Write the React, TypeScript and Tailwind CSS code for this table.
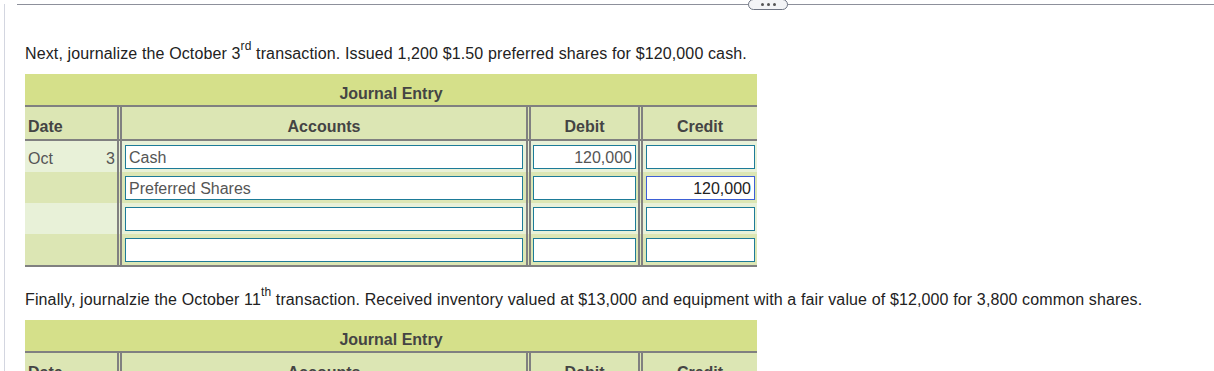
import React from "react";

type Row = {
  date?: string;
  day?: string;
  account?: string;
  debit?: string;
  credit?: string;
  creditFocused?: boolean;
};

function Box({ text, align, focused }: { text?: string; align: "left" | "right"; focused?: boolean }) {
  return (
    <div
      className={
        "h-[24px] bg-white border px-[3px] pt-[1px] text-[16px] leading-[21px] whitespace-nowrap overflow-hidden " +
        (focused ? "border-[#3d5fd6] text-[#222]" : "border-[#1d7b98] text-[#555]") +
        (align === "right" ? " text-right" : " text-left")
      }
    >
      {text ?? ""}
    </div>
  );
}

function JournalTable({ rows }: { rows: Row[] }) {
  return (
    <div className="w-[732px]">
      <div className="h-[33px] bg-[#d5e08a] border-b-2 border-[#808080] pt-[11px] text-center text-[16px] leading-[18px] font-bold text-[#444]">
        Journal Entry
      </div>
      <div className="flex h-[34px] bg-[#dce6b4] border-b-2 border-[#808080] text-[16px] leading-[18px] font-bold text-[#444]">
        <div className="w-[92px] pl-[3px] pt-[11px]">Date</div>
        <div className="w-[409px] border-l-[5px] border-double border-[#808080] pt-[11px] text-center">Accounts</div>
        <div className="w-[112px] border-l-[5px] border-double border-[#808080] pt-[11px] text-center">Debit</div>
        <div className="w-[119px] border-l-[5px] border-double border-[#808080] pt-[11px] text-center">Credit</div>
      </div>
      {rows.map((r, i) => (
        <div
          key={i}
          className={"flex h-[31px] " + (i % 2 === 0 ? "bg-[#e8f1d8]" : "bg-[#dce6b4]")}
        >
          <div className="w-[92px] flex justify-between pl-[3px] pr-[2px] pt-[9px] text-[16px] leading-[18px] text-[#555]">
            <span>{r.date ?? ""}</span>
            <span>{r.day ?? ""}</span>
          </div>
          <div className="w-[409px] border-l-[5px] border-double border-[#808080] pl-[3px] pr-[3px] pt-[4px]">
            <Box text={r.account} align="left" />
          </div>
          <div className="w-[112px] border-l-[5px] border-double border-[#808080] pl-[2px] pr-[2px] pt-[4px]">
            <Box text={r.debit} align="right" />
          </div>
          <div className="w-[119px] border-l-[5px] border-double border-[#808080] pl-[3px] pr-[2px] pt-[4px]">
            <Box text={r.credit} align="right" focused={r.creditFocused} />
          </div>
        </div>
      ))}
      <div className="h-[2px] bg-[#808080]" />
    </div>
  );
}

export default function App() {
  const rows1: Row[] = [
    { date: "Oct", day: "3", account: "Cash", debit: "120,000" },
    { account: "Preferred Shares", credit: "120,000", creditFocused: true },
    {},
    {},
  ];
  const rows2: Row[] = [{}, {}, {}, {}];
  return (
    <div className="relative w-[1214px] h-[371px] overflow-hidden bg-white pl-[4px] font-['Liberation_Sans',Arial,sans-serif]">
      <div className="h-full border-l border-[#d3d6e0] pl-[12px]">
        <div className="relative mt-[4px] h-px bg-[#8d909b]">
          <div className="absolute left-[731px] top-[-5px] w-[40px] h-[11px] rounded-full border border-[#6f7583] bg-[#f3f4f6] flex items-center justify-center gap-[3px]">
            <span className="w-[3px] h-[3px] rounded-full bg-[#555]" />
            <span className="w-[3px] h-[3px] rounded-full bg-[#555]" />
            <span className="w-[3px] h-[3px] rounded-full bg-[#555]" />
          </div>
        </div>
        <div className="pl-[8px]">
          <p className="mt-[40px] text-[16px] leading-[18px] tracking-[0.13px] text-[#222] whitespace-nowrap">
            Next, journalize the October 3
            <sup className="text-[12px] top-[-9px]">rd</sup> transaction. Issued 1,200 $1.50 preferred shares for $120,000 cash.
          </p>
          <div className="mt-[11px]">
            <JournalTable rows={rows1} />
          </div>
          <p className="mt-[24px] text-[16px] leading-[18px] tracking-[0.13px] text-[#222] whitespace-nowrap">
            Finally, journalzie the October 11
            <sup className="text-[12px] top-[-9px]">th</sup> transaction. Received inventory valued at $13,000 and equipment with a fair value of $12,000 for 3,800 common shares.
          </p>
          <div className="mt-[11px]">
            <JournalTable rows={rows2} />
          </div>
        </div>
      </div>
    </div>
  );
}
